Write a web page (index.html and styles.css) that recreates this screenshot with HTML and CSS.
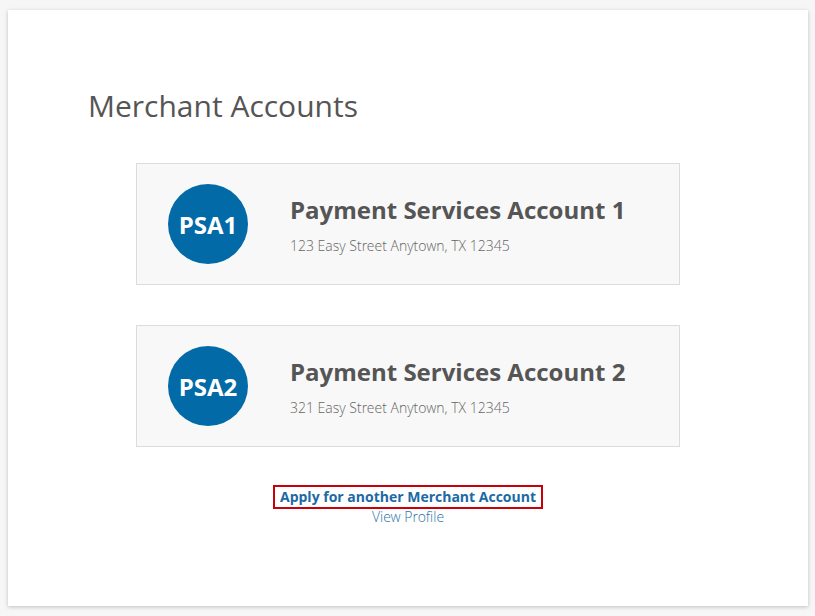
FILE: index.html
```html
<!DOCTYPE html>
<html lang="en">
<head>
<meta charset="utf-8">
<title>Merchant Accounts</title>
<link rel="stylesheet" href="styles.css">
</head>
<body>
<main class="panel">
  <h1 class="page-title">Merchant Accounts</h1>
  <ul class="accounts">
    <li class="account">
      <div class="badge">PSA1</div>
      <div class="account-info">
        <h2 class="account-name">Payment Services Account 1</h2>
        <p class="account-address">123 Easy Street Anytown, TX 12345</p>
      </div>
    </li>
    <li class="account">
      <div class="badge">PSA2</div>
      <div class="account-info">
        <h2 class="account-name">Payment Services Account 2</h2>
        <p class="account-address">321 Easy Street Anytown, TX 12345</p>
      </div>
    </li>
  </ul>
  <div class="links">
    <a class="apply-link" href="#">Apply for another Merchant Account</a>
    <a class="profile-link" href="#">View Profile</a>
  </div>
</main>
</body>
</html>
```

FILE: styles.css
```css
html, body {
  margin: 0;
  padding: 0;
}
body {
  background: #f6f6f6;
  font-family: "Open Sans", "Liberation Sans", sans-serif;
  color: #555;
  padding: 10px 7px 10px 8px;
}
.panel {
  width: 800px;
  height: 596px;
  box-sizing: border-box;
  background: #fff;
  box-shadow: 0 1px 4px rgba(0, 0, 0, 0.22);
  padding-top: 90px;
  display: flex;
  flex-direction: column;
  align-items: center;
}
.page-title {
  align-self: stretch;
  margin: -12px 0 39px 80px;
  font-size: 30px;
  line-height: 36px;
  font-weight: 400;
  color: #555;
}
.accounts {
  list-style: none;
  margin: 0;
  padding: 0;
  display: flex;
  flex-direction: column;
  gap: 40px;
}
.account {
  width: 544px;
  height: 122px;
  box-sizing: border-box;
  background: #f8f8f8;
  border: 1px solid #dcdcdc;
  padding: 0 31px;
  display: flex;
  align-items: center;
  gap: 42px;
}
.badge {
  width: 80px;
  height: 80px;
  border-radius: 50%;
  background: #026aa7;
  color: #fff;
  font-weight: 700;
  font-size: 24px;
  display: flex;
  align-items: center;
  justify-content: center;
  flex: none;
}
.account-info {
  display: flex;
  flex-direction: column;
  gap: 13px;
  margin-top: 3px;
}
.account-name {
  margin: 0;
  font-size: 24px;
  line-height: 28px;
  font-weight: 700;
  color: #555;
}
.account-address {
  margin: 0;
  font-family: "Open Sans Light", "Open Sans", "Liberation Sans", sans-serif;
  font-size: 14px;
  line-height: 18px;
  font-weight: 300;
  color: #666;
}
.links {
  margin-top: 40px;
  display: flex;
  flex-direction: column;
  align-items: center;
}
.apply-link {
  display: inline-block;
  padding: 0 5px;
  font-size: 14px;
  line-height: 20px;
  font-weight: 700;
  color: #1b69a5;
  text-decoration: none;
  outline: 2px solid #c8000a;
}
.profile-link {
  font-family: "Open Sans Light", "Open Sans", "Liberation Sans", sans-serif;
  font-size: 14px;
  line-height: 20px;
  font-weight: 300;
  color: #2a72a8;
  text-decoration: none;
}
```
